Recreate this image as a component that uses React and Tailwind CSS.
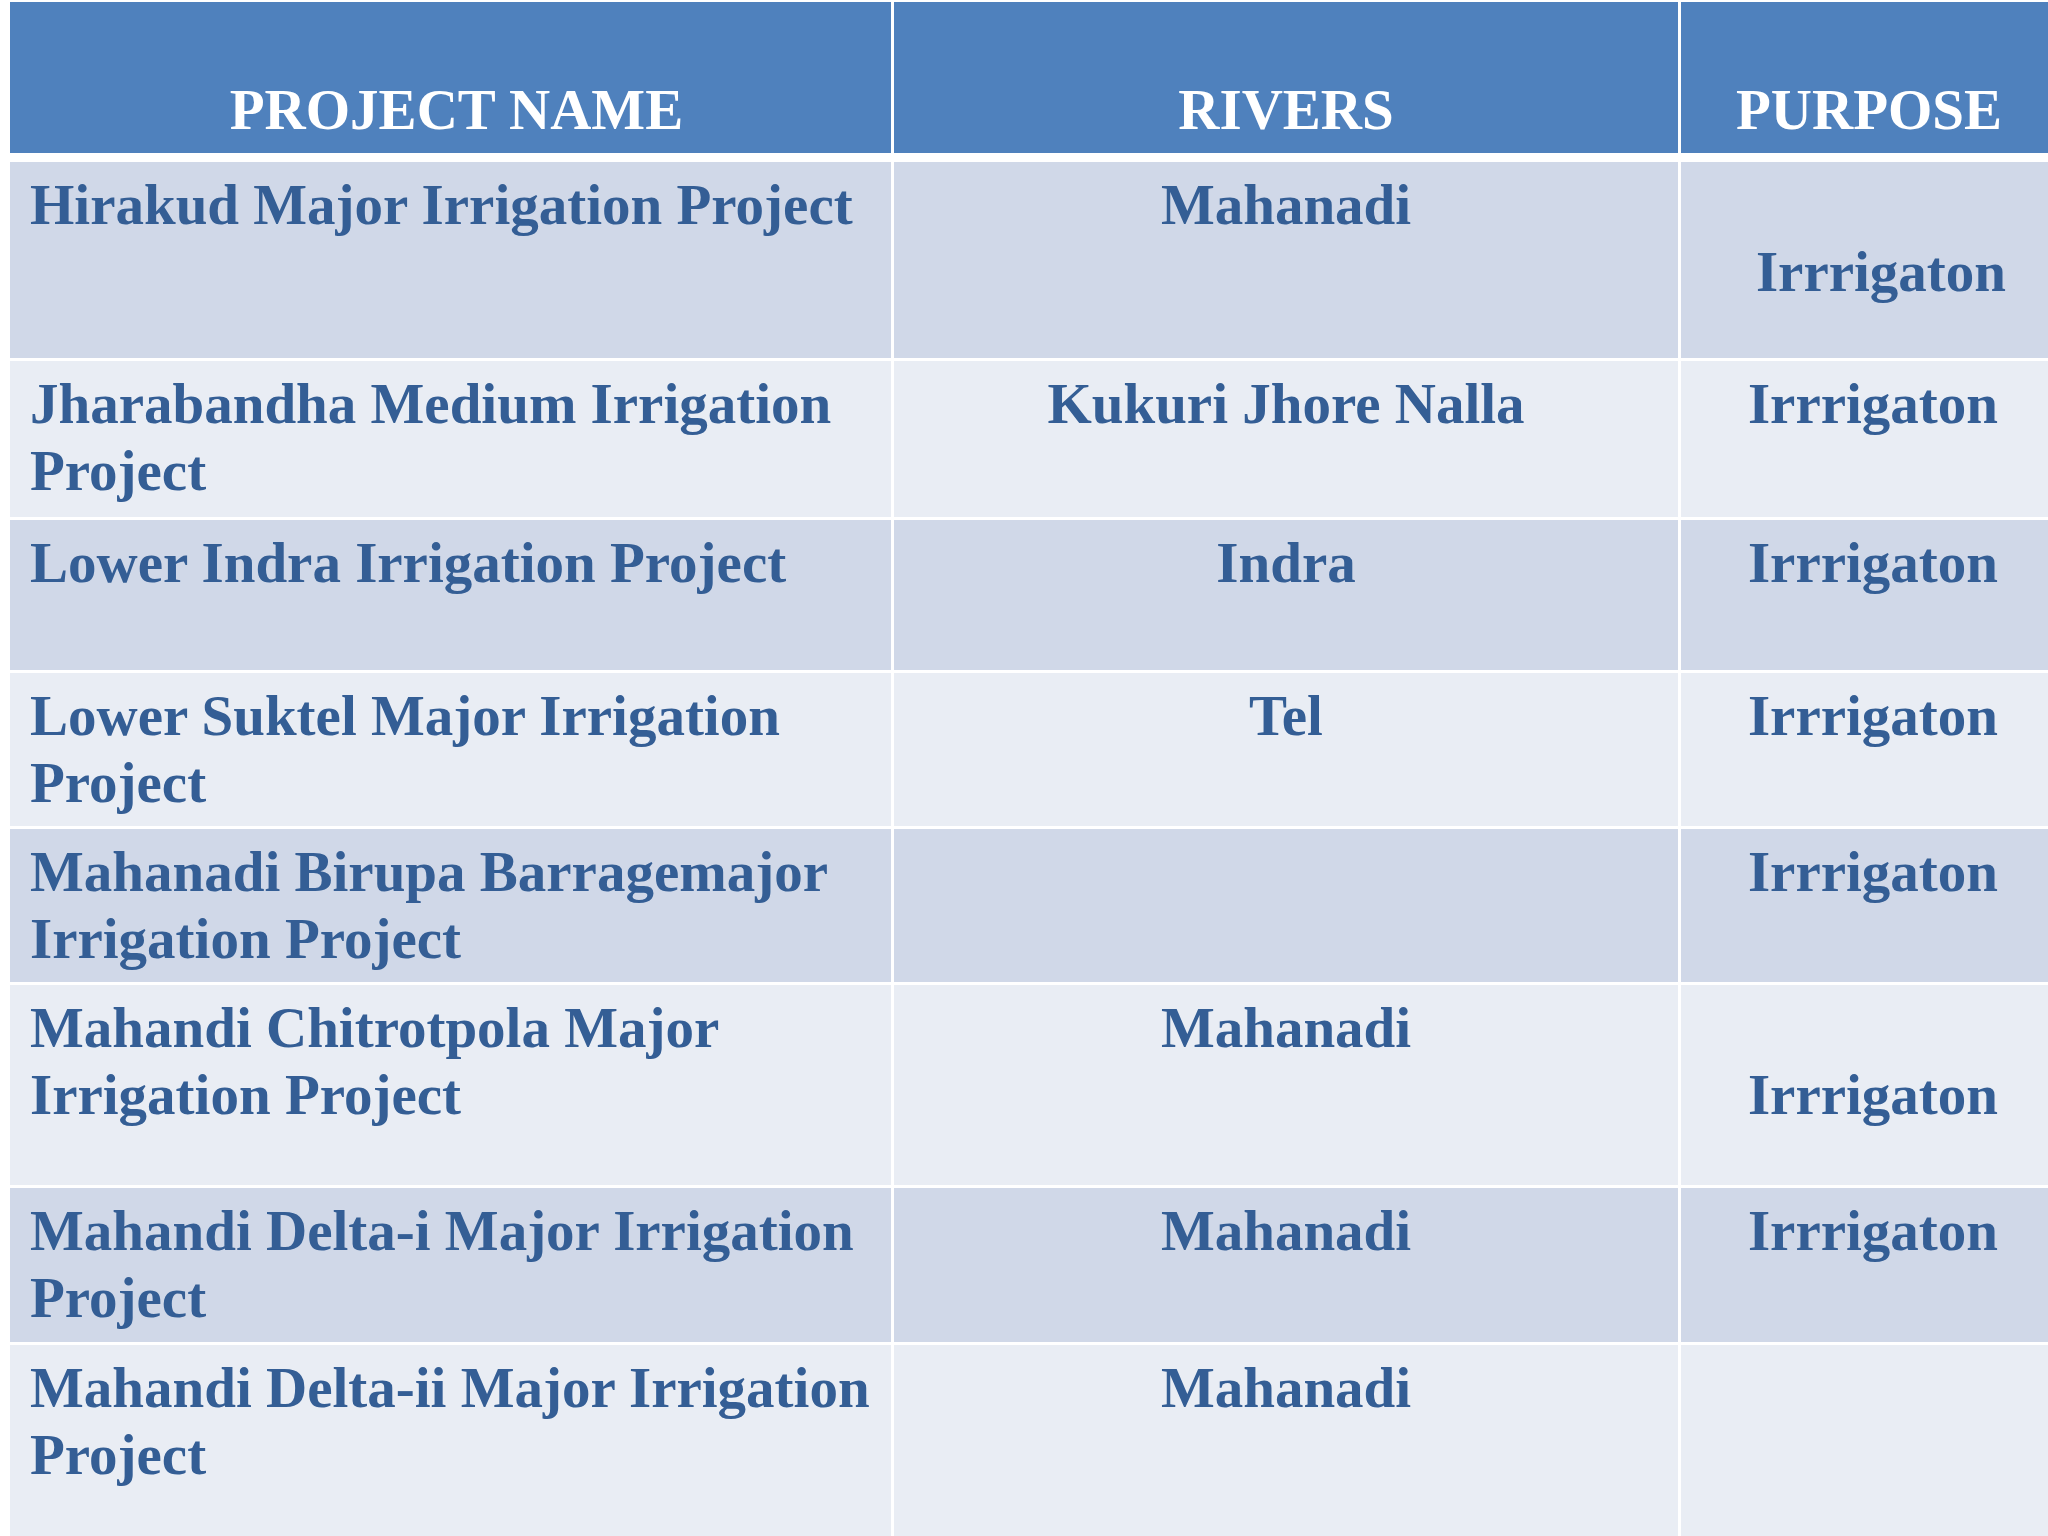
const rows = [
  {
    h: "h-[196px]",
    bg: "bg-[#d0d8e8]",
    name: ["Hirakud Major Irrigation Project"],
    river: "Mahanadi",
    purpose: "Irrrigaton",
    purposeLine: 2,
    shift: true,
  },
  {
    h: "h-[156px]",
    bg: "bg-[#e9edf4]",
    name: ["Jharabandha Medium Irrigation", "Project"],
    river: "Kukuri Jhore Nalla",
    purpose: "Irrrigaton",
  },
  {
    h: "h-[150px]",
    bg: "bg-[#d0d8e8]",
    name: ["Lower Indra Irrigation Project"],
    river: "Indra",
    purpose: "Irrrigaton",
  },
  {
    h: "h-[153px]",
    bg: "bg-[#e9edf4]",
    name: ["Lower Suktel Major Irrigation", "Project"],
    river: "Tel",
    purpose: "Irrrigaton",
  },
  {
    h: "h-[153px]",
    bg: "bg-[#d0d8e8]",
    name: ["Mahanadi Birupa Barragemajor", "Irrigation Project"],
    river: "",
    purpose: "Irrrigaton",
  },
  {
    h: "h-[200px]",
    bg: "bg-[#e9edf4]",
    name: ["Mahandi Chitrotpola Major", "Irrigation Project"],
    river: "Mahanadi",
    purpose: "Irrrigaton",
    purposeLine: 2,
  },
  {
    h: "h-[154px]",
    bg: "bg-[#d0d8e8]",
    name: ["Mahandi Delta-i Major Irrigation", "Project"],
    river: "Mahanadi",
    purpose: "Irrrigaton",
  },
  {
    h: "h-[200px]",
    bg: "bg-[#e9edf4]",
    name: ["Mahandi Delta-ii Major Irrigation", "Project"],
    river: "Mahanadi",
    purpose: "",
  },
];

const font = "font-['Liberation_Serif','Times_New_Roman',serif] font-bold text-[57px] leading-[67px]";

const App = () => {
  return (
    <div className="w-[2048px] h-[1536px] overflow-hidden bg-white pl-[10px] pt-[2px]">
      <div className={`w-[2052px] ${font} text-[#345e95]`}>
        <div className="grid grid-cols-[881px_784px_384px] gap-x-[3px] h-[151px]">
          <div className="bg-[#4f81bd] flex items-end justify-center pb-[10px] pl-[12px] text-white">
            PROJECT NAME
          </div>
          <div className="bg-[#4f81bd] flex items-end justify-center pb-[10px] text-white">
            RIVERS
          </div>
          <div className="bg-[#4f81bd] flex items-end justify-center pb-[10px] pr-[8px] text-white">
            PURPOSE
          </div>
        </div>

        <div className="flex flex-col gap-y-[3px] mt-[9px]">
          {rows.map((r, i) => (
            <div key={i} className={`grid grid-cols-[881px_784px_384px] gap-x-[3px] ${r.h}`}>
              <div className={`${r.bg} pl-[20px] pt-[9px] whitespace-nowrap`}>
                {r.name.map((l, j) => (
                  <div key={j}>{l}</div>
                ))}
              </div>
              <div className={`${r.bg} pt-[9px] text-center whitespace-nowrap`}>
                {r.river}
              </div>
              <div
                className={`${r.bg} pt-[9px] text-center whitespace-nowrap ${r.shift ? "pl-[16px]" : ""}`}
              >
                {r.purposeLine === 2 && <div>&nbsp;</div>}
                <div>{r.purpose}</div>
              </div>
            </div>
          ))}
        </div>
      </div>
    </div>
  );
};

export default App;
